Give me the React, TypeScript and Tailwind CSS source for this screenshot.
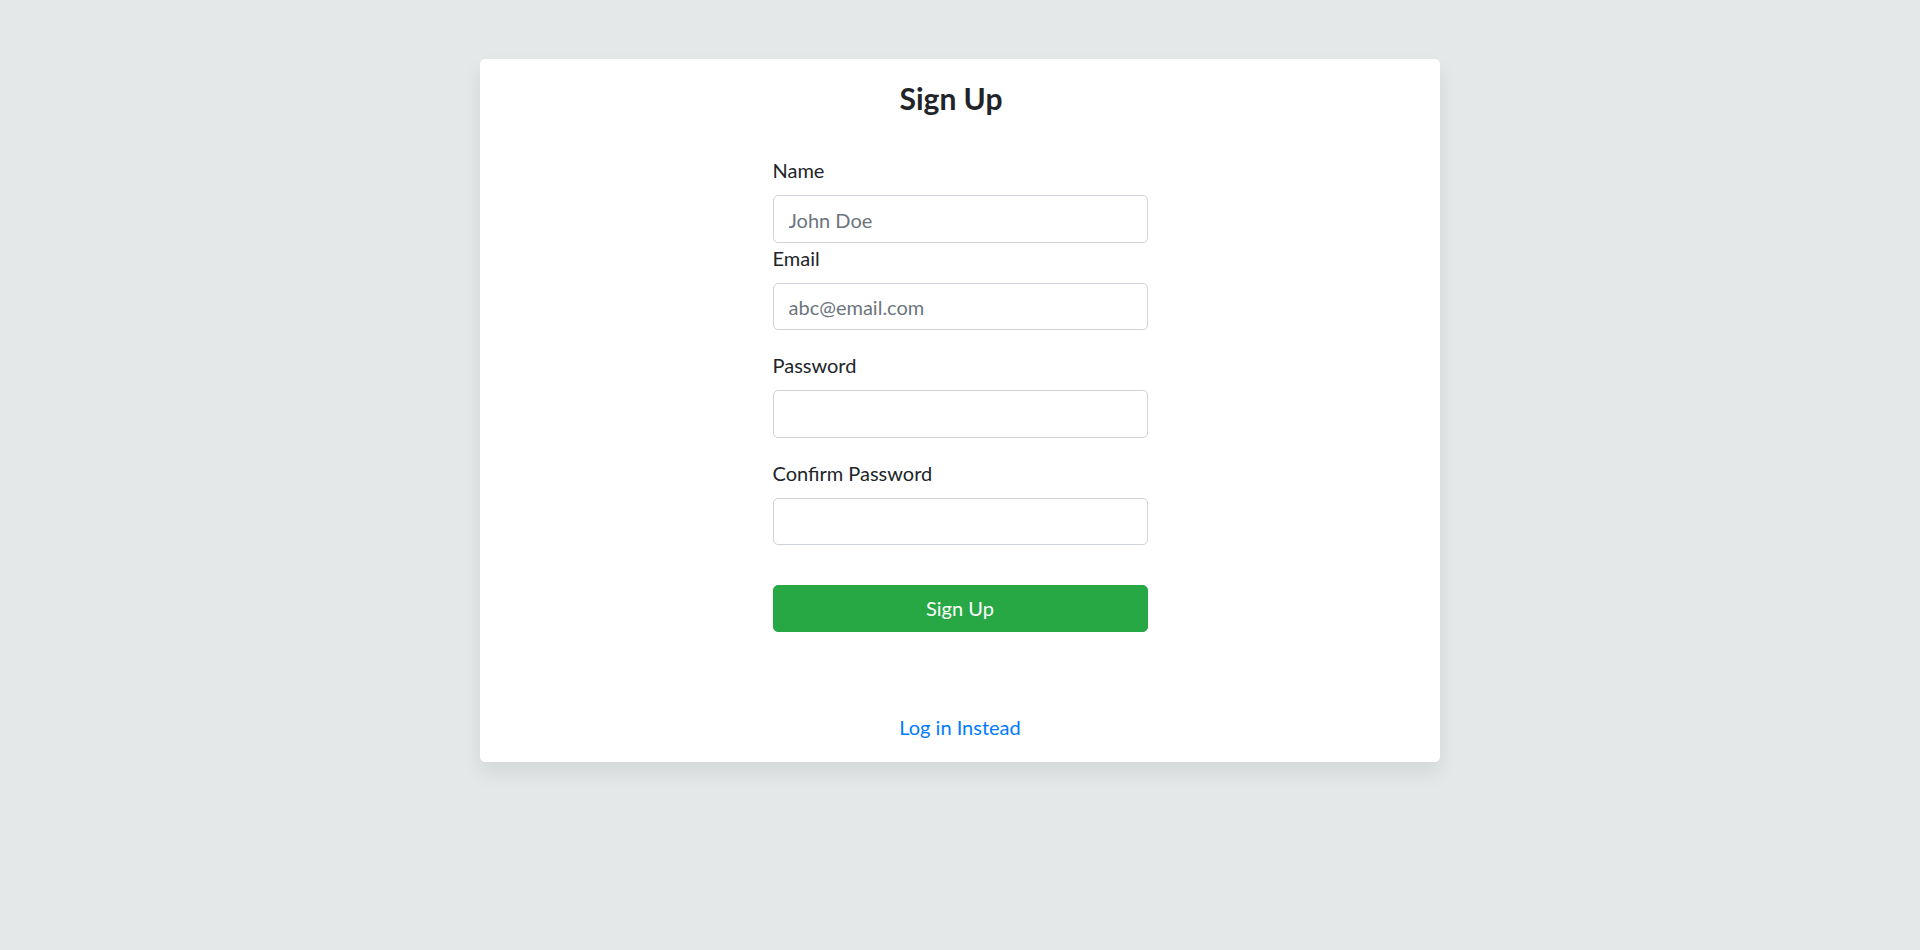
import { useState } from 'react';

const font = { fontFamily: 'Lato, "Noto Sans", sans-serif' };

interface FieldProps {
    label: string;
    type?: string;
    placeholder?: string;
    value: string;
    onChange: (v: string) => void;
    spaced?: boolean;
}

function Field({ label, type = 'text', placeholder, value, onChange, spaced = true }: FieldProps) {
    return (
        <div className={spaced ? 'mb-[20px]' : ''}>
            <label className="block mb-[10px] text-[20px] leading-[30px] text-[#212529]">{label}</label>
            <input
                type={type}
                placeholder={placeholder}
                value={value}
                onChange={(e) => onChange(e.target.value)}
                className="block w-full h-[47.5px] px-[15px] pt-[2px] text-[20px] text-[#495057] bg-white border border-[#ced4da] rounded-[5px] outline-none placeholder:text-[#6c757d] focus:border-[#80bdff]"
            />
        </div>
    );
}

export default function App() {
    const [name, setName] = useState('');
    const [email, setEmail] = useState('');
    const [password, setPassword] = useState('');
    const [confirm, setConfirm] = useState('');

    return (
        <div className="min-h-screen bg-[#e4e8e9] pt-[59px]" style={font}>
            <div className="w-[960px] mx-auto bg-white rounded-[5px] shadow-[0_10px_20px_rgba(0,0,0,0.08)] pt-[22px] pb-[20px]">
                <h3 className="text-center pr-[18px] text-[30px] leading-[34px] font-bold text-[#212529]">Sign Up</h3>
                <form className="w-[375px] mx-auto mt-[40px]" onSubmit={(e) => e.preventDefault()}>
                    <Field label="Name" placeholder="John Doe" value={name} onChange={setName} spaced={false} />
                    <Field label="Email" type="email" placeholder="abc@email.com" value={email} onChange={setEmail} />
                    <Field label="Password" type="password" value={password} onChange={setPassword} />
                    <Field label="Confirm Password" type="password" value={confirm} onChange={setConfirm} spaced={false} />
                    <button
                        type="submit"
                        className="block w-full h-[47.5px] mt-[39.5px] bg-[#28a745] text-white text-[20px] rounded-[5px] border border-[#28a745] hover:bg-[#218838]"
                    >
                        Sign Up
                    </button>
                </form>
                <div className="mt-[79.5px] text-center">
                    <a href="#" className="text-[20px] leading-[30px] text-[#007bff] hover:underline">Log in Instead</a>
                </div>
            </div>
        </div>
    );
}
